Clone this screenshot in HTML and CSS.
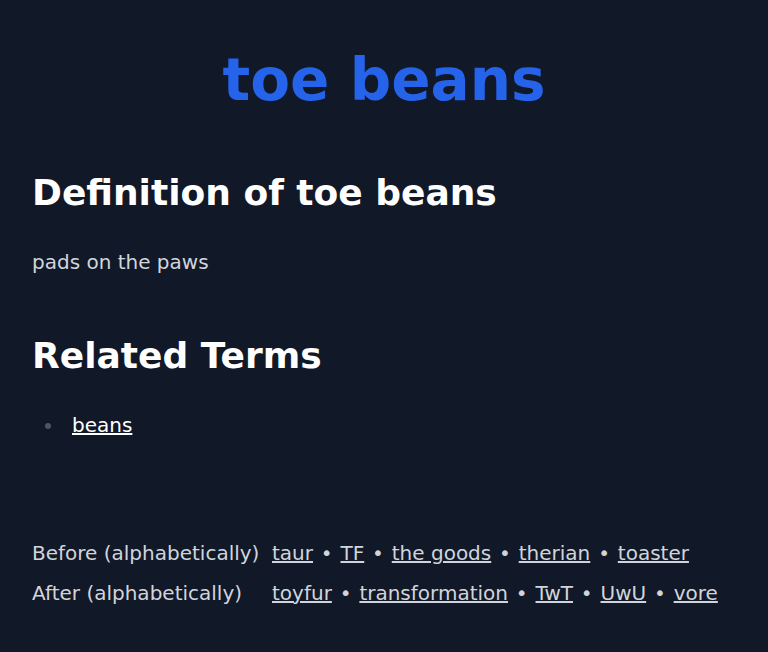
FILE: index.html
```html
<!DOCTYPE html>
<html lang="en">
<head>
    <meta charset="UTF-8">
    <meta name="viewport" content="width=device-width, initial-scale=1.0">
    <title>toe beans</title>
    <link rel="stylesheet" href="styles.css">
</head>
<body>
    <main class="page">
        <h1 class="term">toe beans</h1>

        <section class="block">
            <h2>Definition of toe beans</h2>
            <p class="definition">pads on the paws</p>
        </section>

        <section class="block">
            <h2>Related Terms</h2>
            <ul class="related">
                <li><a href="#">beans</a></li>
            </ul>
        </section>

        <nav class="neighbours">
            <div class="neighbour-row">
                <span class="neighbour-label">Before (alphabetically)</span>
                <span class="neighbour-links">
                    <a href="#">taur</a> <span class="dot">•</span>
                    <a href="#">TF</a> <span class="dot">•</span>
                    <a href="#">the goods</a> <span class="dot">•</span>
                    <a href="#">therian</a> <span class="dot">•</span>
                    <a href="#">toaster</a>
                </span>
            </div>
            <div class="neighbour-row">
                <span class="neighbour-label">After (alphabetically)</span>
                <span class="neighbour-links">
                    <a href="#">toyfur</a> <span class="dot">•</span>
                    <a href="#">transformation</a> <span class="dot">•</span>
                    <a href="#">TwT</a> <span class="dot">•</span>
                    <a href="#">UwU</a> <span class="dot">•</span>
                    <a href="#">vore</a>
                </span>
            </div>
        </nav>
    </main>
</body>
</html>
```

FILE: styles.css
```css
body {
    background-color: #111827;
    color: #d1d5db;
    font-family: "DejaVu Sans", sans-serif;
    margin: 0;
}

.page {
    padding: 32px 32px;
}

.term {
    color: #2563eb;
    font-size: 58px;
    font-weight: bold;
    text-align: center;
    margin: 19px 0 64px;
    line-height: 1;
}

h2 {
    color: #ffffff;
    font-size: 36px;
    font-weight: bold;
    margin: 0 0 35px;
    line-height: 40px;
}

.block {
    margin-bottom: 60px;
}

.definition {
    font-size: 20px;
    margin: 0;
    line-height: 28px;
}

.related {
    margin: 0;
    padding-left: 32px;
    font-size: 20px;
    line-height: 28px;
}

.related li {
    padding-left: 8px;
}

.related li::marker {
    color: #4b5563;
}

a {
    color: inherit;
}

.related a {
    color: #ffffff;
}

.neighbours {
    margin-top: 100px;
    font-size: 20px;
}

.neighbour-row {
    display: flex;
    line-height: 28px;
    margin-bottom: 12px;
}

.neighbour-label {
    width: 240px;
    flex-shrink: 0;
}

.dot {
    margin: 0 1.5px;
}
```
